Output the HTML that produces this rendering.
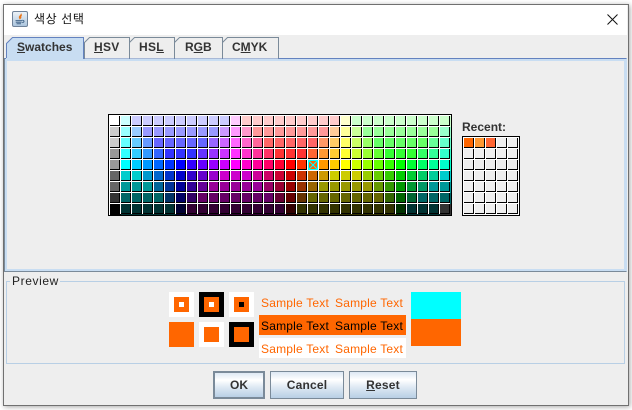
<!DOCTYPE html>
<html><head><meta charset="utf-8">
<style>
html,body{margin:0;padding:0;width:632px;height:410px;overflow:hidden;background:#fff;}
body{position:relative;font-family:"Liberation Sans","Noto Sans CJK KR",sans-serif;font-size:12px;color:#333;}
div,span.a,svg{position:absolute;}
#win{left:3px;top:4px;width:624px;height:400px;background:#eee;border:1px solid #707070;box-shadow:1px 1px 5px rgba(0,0,0,.35);box-sizing:content-box;}
.abs{position:absolute;}
.t{position:absolute;white-space:nowrap;line-height:14px;}
.b{font-weight:bold;}
u{text-decoration:underline;}
.row{left:110px;width:341px;height:11px;display:flex;}
.row i{display:block;flex:1;}
.grid{background:
repeating-linear-gradient(90deg,transparent 0 10px,#fff 10px 11px),
repeating-linear-gradient(180deg,transparent 0 10px,#fff 10px 11px),
repeating-linear-gradient(90deg,transparent 0 9px,#000 9px 10px,transparent 10px 11px),
repeating-linear-gradient(180deg,transparent 0 9px,#000 9px 10px,transparent 10px 11px);}
.tab{background:#eee;border:1px solid #7a8a99;border-bottom:0;box-sizing:border-box;}
.btn{box-sizing:border-box;border:1px solid #7a8a99;background:linear-gradient(180deg,#dde8f3 0,#fff 30%,#dde8f3 60%,#b8cfe5 100%);text-align:center;font-weight:bold;line-height:26px;}
</style></head><body>
<div id="win"></div>
<div style="left:4px;top:5px;width:623px;height:30px;background:#fff"></div>

<svg style="left:12px;top:11px" width="16" height="16" viewBox="0 0 16 16">
<defs><linearGradient id="g" x1="0" y1="0" x2="0" y2="1"><stop offset="0" stop-color="#eef3f8"/><stop offset="1" stop-color="#a9c3dc"/></linearGradient></defs>
<rect x=".5" y=".5" width="15" height="15" rx="1.5" fill="url(#g)" stroke="#6f8299"/>
<path d="M8.8 1.8C9.8 3.6 6.6 4.6 6.8 6.4C6.9 7.3 7.6 7.9 7.8 8.6C8.8 7.6 9.8 6.8 9.2 5.6C10.4 4.6 9.8 3 8.8 1.8Z" fill="#e8761a"/>
<path d="M3.5 9.6H10M3.8 11.2H9.6M4.6 12.8H9" stroke="#47698c" stroke-width="1" fill="none"/>
<path d="M10.2 9.4C12.6 9 12.6 11.2 10.2 11.6" stroke="#47698c" fill="none"/>
</svg>
<span class="t" style="left:34px;top:12px;color:#111;font-size:12px;line-height:14px;letter-spacing:.6px">색상 선택</span>
<svg style="left:607px;top:14px" width="11" height="11" viewBox="0 0 11 11"><path d="M.5.5L10.5 10.5M10.5.5L.5 10.5" stroke="#111" stroke-width="1" fill="none"/></svg>

<!-- content panel -->
<div style="left:4px;top:58px;width:623px;height:214px;box-sizing:border-box;border:1px solid #6382bf;border-color:#6382bf #c8ddf2 #7a8a99 #7a8a99;background:#eee"></div>
<div style="left:5px;top:59px;width:621px;height:212px;box-sizing:border-box;border:2px solid #c8ddf2;background:#eee"></div>

<!-- tabs -->
<svg style="left:6px;top:36px" width="280" height="24" viewBox="0 0 280 24">
<path d="M78.5 22.5V6.5L83.5 1.5H123.5V22.5" fill="#eee" stroke="#7a8a99"/>
<path d="M123.5 22.5V6.5L128.5 1.5H168.5V22.5" fill="#eee" stroke="#7a8a99"/>
<path d="M168.5 22.5V6.5L173.5 1.5H216.5V22.5" fill="#eee" stroke="#7a8a99"/>
<path d="M216.5 22.5V6.5L221.5 1.5H272.5V22.5" fill="#eee" stroke="#7a8a99"/>
<path d="M.5 22.5V7.5L6.5 1.5H77.5V22.5Z" fill="#c8ddf2" stroke="#6382bf"/>
<path d="M1 24V8L7 2.5H77V24Z" fill="#c8ddf2"/>
</svg>
<div style="left:6px;top:58px;width:77px;height:3px;background:#c8ddf2"></div>
<span class="t b" style="left:17px;top:40px"><u>S</u>watches</span>
<span class="t b" style="left:94px;top:40px;letter-spacing:.3px"><u>H</u>SV</span>
<span class="t b" style="left:139px;top:40px;letter-spacing:.3px">HS<u>L</u></span>
<span class="t b" style="left:185px;top:40px">R<u>G</u>B</span>
<span class="t b" style="left:232px;top:40px">C<u>M</u>YK</span>

<!-- main swatches -->
<div style="left:108px;top:114px;width:344px;height:102px;box-sizing:border-box;border:1px solid #000;background:#fff"></div>
<div class="row" style="top:116px"><i style="background:#fff"></i><i style="background:#cff"></i><i style="flex:9;background:#ccf"></i><i style="background:#fcf"></i><i style="flex:9;background:#fcc"></i><i style="background:#ffc"></i><i style="flex:9;background:#cfc"></i></div>
<div class="row" style="top:127px"><i style="background:#ccc"></i><i style="background:#9ff"></i><i style="background:#9cf"></i><i style="flex:7;background:#99f"></i><i style="background:#c9f"></i><i style="background:#f9f"></i><i style="background:#f9c"></i><i style="flex:7;background:#f99"></i><i style="background:#fc9"></i><i style="background:#ff9"></i><i style="background:#cf9"></i><i style="flex:7;background:#9f9"></i><i style="background:#9fc"></i></div>
<div class="row" style="top:138px"><i style="background:#ccc"></i><i style="background:#6ff"></i><i style="background:#6cf"></i><i style="background:#69f"></i><i style="flex:5;background:#66f"></i><i style="background:#96f"></i><i style="background:#c6f"></i><i style="background:#f6f"></i><i style="background:#f6c"></i><i style="background:#f69"></i><i style="flex:5;background:#f66"></i><i style="background:#f96"></i><i style="background:#fc6"></i><i style="background:#ff6"></i><i style="background:#cf6"></i><i style="background:#9f6"></i><i style="flex:5;background:#6f6"></i><i style="background:#6f9"></i><i style="background:#6fc"></i></div>
<div class="row" style="top:149px"><i style="background:#999"></i><i style="background:#3ff"></i><i style="background:#3cf"></i><i style="background:#39f"></i><i style="background:#36f"></i><i style="flex:3;background:#33f"></i><i style="background:#63f"></i><i style="background:#93f"></i><i style="background:#c3f"></i><i style="background:#f3f"></i><i style="background:#f3c"></i><i style="background:#f39"></i><i style="background:#f36"></i><i style="flex:3;background:#f33"></i><i style="background:#f63"></i><i style="background:#f93"></i><i style="background:#fc3"></i><i style="background:#ff3"></i><i style="background:#cf3"></i><i style="background:#9f3"></i><i style="background:#6f3"></i><i style="flex:3;background:#3f3"></i><i style="background:#3f6"></i><i style="background:#3f9"></i><i style="background:#3fc"></i></div>
<div class="row" style="top:160px"><i style="background:#999"></i><i style="background:#0ff"></i><i style="background:#0cf"></i><i style="background:#09f"></i><i style="background:#06f"></i><i style="background:#03f"></i><i style="background:#00f"></i><i style="background:#30f"></i><i style="background:#60f"></i><i style="background:#90f"></i><i style="background:#c0f"></i><i style="background:#f0f"></i><i style="background:#f0c"></i><i style="background:#f09"></i><i style="background:#f06"></i><i style="background:#f03"></i><i style="background:#f00"></i><i style="background:#f30"></i><i style="background:#f60"></i><i style="background:#f90"></i><i style="background:#fc0"></i><i style="background:#ff0"></i><i style="background:#cf0"></i><i style="background:#9f0"></i><i style="background:#6f0"></i><i style="background:#3f0"></i><i style="background:#0f0"></i><i style="background:#0f3"></i><i style="background:#0f6"></i><i style="background:#0f9"></i><i style="background:#0fc"></i></div>
<div class="row" style="top:171px"><i style="background:#666"></i><i style="flex:2;background:#0cc"></i><i style="background:#09c"></i><i style="background:#06c"></i><i style="background:#03c"></i><i style="background:#00c"></i><i style="background:#30c"></i><i style="background:#60c"></i><i style="background:#90c"></i><i style="flex:3;background:#c0c"></i><i style="background:#c09"></i><i style="background:#c06"></i><i style="background:#c03"></i><i style="background:#c00"></i><i style="background:#c30"></i><i style="background:#c60"></i><i style="background:#c90"></i><i style="flex:3;background:#cc0"></i><i style="background:#9c0"></i><i style="background:#6c0"></i><i style="background:#3c0"></i><i style="background:#0c0"></i><i style="background:#0c3"></i><i style="background:#0c6"></i><i style="background:#0c9"></i><i style="background:#0cc"></i></div>
<div class="row" style="top:182px"><i style="background:#666"></i><i style="flex:3;background:#099"></i><i style="background:#069"></i><i style="background:#039"></i><i style="background:#009"></i><i style="background:#309"></i><i style="background:#609"></i><i style="flex:5;background:#909"></i><i style="background:#906"></i><i style="background:#903"></i><i style="background:#900"></i><i style="background:#930"></i><i style="background:#960"></i><i style="flex:5;background:#990"></i><i style="background:#690"></i><i style="background:#390"></i><i style="background:#090"></i><i style="background:#093"></i><i style="background:#096"></i><i style="flex:2;background:#099"></i></div>
<div class="row" style="top:193px"><i style="background:#333"></i><i style="flex:4;background:#066"></i><i style="background:#036"></i><i style="background:#006"></i><i style="background:#306"></i><i style="flex:7;background:#606"></i><i style="background:#603"></i><i style="background:#600"></i><i style="background:#630"></i><i style="flex:7;background:#660"></i><i style="background:#360"></i><i style="background:#060"></i><i style="background:#063"></i><i style="flex:3;background:#066"></i></div>
<div class="row" style="top:204px"><i style="background:#000"></i><i style="flex:5;background:#033"></i><i style="background:#003"></i><i style="flex:9;background:#303"></i><i style="background:#300"></i><i style="flex:9;background:#330"></i><i style="background:#030"></i><i style="flex:3;background:#033"></i><i style="background:#333"></i></div>
<div class="grid" style="left:110px;top:116px;width:340px;height:98px"></div>
<svg style="left:308px;top:160px" width="10" height="10" viewBox="0 0 10 10" shape-rendering="crispEdges"><path d="M.5.5H9.5V9.5H.5Z" fill="none" stroke="#0ff"/><path d="M0 0L10 10M10 0L0 10" stroke="#0ff" fill="none"/></svg>

<!-- recent -->
<span class="t b" style="left:462px;top:120px">Recent:</span>
<div style="left:462px;top:136px;width:58px;height:80px;box-sizing:border-box;border:1px solid #000;background:#fff"></div>
<div style="left:464px;top:138px;width:54px;height:76px;background:#eee"></div>
<div style="left:464px;top:138px;width:11px;height:11px;background:#f60"></div>
<div style="left:475px;top:138px;width:11px;height:11px;background:#f93"></div>
<div style="left:486px;top:138px;width:11px;height:11px;background:#f63"></div>
<div class="grid" style="left:464px;top:138px;width:54px;height:76px"></div>

<!-- preview -->
<div style="left:6px;top:281px;width:619px;height:83px;box-sizing:border-box;border:1px solid #b8cfe5"></div>
<div style="left:10px;top:274px;width:50px;height:14px;background:#eee"></div>
<span class="t" style="left:12px;top:274px;letter-spacing:.6px;color:#222">Preview</span>

<div style="left:169px;top:292px;width:25px;height:25px;background:#fff"></div>
<div style="left:174px;top:297px;width:15px;height:15px;background:#f60"></div>
<div style="left:179px;top:302px;width:5px;height:5px;background:#fff"></div>
<div style="left:199px;top:292px;width:25px;height:25px;background:#000"></div>
<div style="left:204px;top:297px;width:15px;height:15px;background:#f60"></div>
<div style="left:209px;top:302px;width:5px;height:5px;background:#fff"></div>
<div style="left:229px;top:292px;width:25px;height:25px;background:#fff"></div>
<div style="left:234px;top:297px;width:15px;height:15px;background:#f60"></div>
<div style="left:239px;top:302px;width:5px;height:5px;background:#000"></div>
<div style="left:169px;top:322px;width:25px;height:25px;background:#f60"></div>
<div style="left:199px;top:322px;width:25px;height:25px;background:#fff"></div>
<div style="left:204px;top:327px;width:15px;height:15px;background:#f60"></div>
<div style="left:229px;top:322px;width:25px;height:25px;background:#000"></div>
<div style="left:234px;top:327px;width:15px;height:15px;background:#f60"></div>

<div style="left:259px;top:315px;width:147px;height:20px;background:#f60"></div>
<div style="left:259px;top:338px;width:147px;height:20px;background:#fff"></div>
<span class="t" style="left:261px;top:296px;color:#f60;letter-spacing:.2px">Sample Text</span>
<span class="t" style="left:335px;top:296px;color:#f60;letter-spacing:.2px">Sample Text</span>
<span class="t" style="left:261px;top:319px;color:#000;letter-spacing:.2px">Sample Text</span>
<span class="t" style="left:335px;top:319px;color:#000;letter-spacing:.2px">Sample Text</span>
<span class="t" style="left:261px;top:342px;color:#f60;letter-spacing:.2px">Sample Text</span>
<span class="t" style="left:335px;top:342px;color:#f60;letter-spacing:.2px">Sample Text</span>

<div style="left:411px;top:292px;width:50px;height:27px;background:#0ff"></div>
<div style="left:411px;top:319px;width:50px;height:27px;background:#f60"></div>

<!-- buttons -->
<div class="btn" style="left:213px;top:371px;width:52px;height:28px;border:2px solid #7a8a99;line-height:24px">OK</div>
<div class="btn" style="left:270px;top:371px;width:74px;height:28px;letter-spacing:.2px">Cancel</div>
<div class="btn" style="left:349px;top:371px;width:68px;height:28px;letter-spacing:.2px"><u>R</u>eset</div>
</body></html>
